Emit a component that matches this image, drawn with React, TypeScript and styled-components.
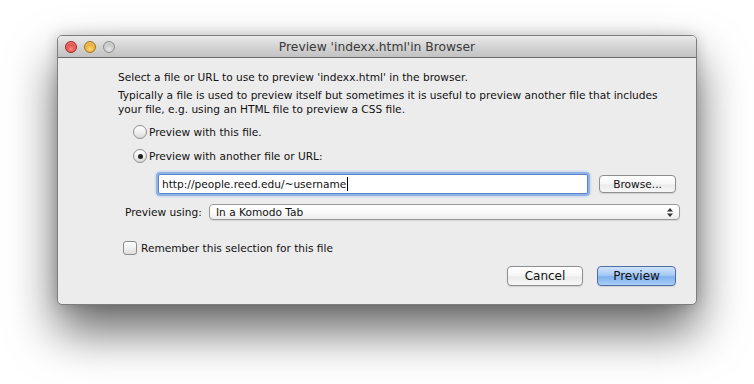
import React from 'react';
import styled, { createGlobalStyle } from 'styled-components';

const GlobalStyle = createGlobalStyle`
  html, body {
    margin: 0;
    padding: 0;
    background: #ffffff;
  }
  body {
    font-family: "DejaVu Sans", "Liberation Sans", sans-serif;
  }
`;

const Page = styled.div`
  width: 754px;
  height: 384px;
  box-sizing: border-box;
  padding: 35px 57px 0 57px;
  overflow: hidden;
`;

const Window = styled.div`
  width: 640px;
  height: 270px;
  box-sizing: border-box;
  border-radius: 5px;
  border: 1px solid #7d7d7d;
  background: #ececec;
  box-shadow: 0 26px 48px rgba(0, 0, 0, 0.6), 0 0 14px rgba(0, 0, 0, 0.18);
  display: flex;
  flex-direction: column;
  overflow: hidden;
`;

const TitleBar = styled.div`
  height: 22px;
  flex-shrink: 0;
  box-sizing: border-box;
  display: flex;
  align-items: center;
  position: relative;
  padding-left: 7px;
  gap: 7px;
  background: linear-gradient(#eaeaea, #d4d4d4 50%, #c2c2c2);
  border-bottom: 1px solid #6b6b6b;
`;

const Light = styled.span<{ $c1: string; $c2: string; $edge: string }>`
  width: 12px;
  height: 12px;
  border-radius: 50%;
  box-sizing: border-box;
  border: 1px solid ${(p) => p.$edge};
  background: radial-gradient(circle at 50% 70%, ${(p) => p.$c1}, ${(p) => p.$c2} 75%);
  box-shadow: inset 0 1px 2px rgba(255, 255, 255, 0.6);
`;

const Title = styled.div`
  position: absolute;
  left: 0;
  right: 0;
  text-align: center;
  font-size: 12.3px;
  color: #3a3a3a;
  pointer-events: none;
`;

const Body = styled.div`
  flex: 1;
  display: flex;
  flex-direction: column;
  padding: 12px 20px 0 60px;
  font-size: 10.6px;
  color: #111;
`;

const Para = styled.div<{ $top?: number }>`
  line-height: 14px;
  margin-top: ${(p) => p.$top ?? 0}px;
  white-space: nowrap;
`;

const OptionRow = styled.label<{ $top: number; $indent?: number }>`
  display: flex;
  align-items: center;
  gap: 2px;
  height: 16px;
  margin-top: ${(p) => p.$top}px;
  margin-left: ${(p) => p.$indent ?? 0}px;
`;

const Radio = styled.span<{ $on?: boolean }>`
  width: 14px;
  height: 14px;
  border-radius: 50%;
  box-sizing: border-box;
  border: 1px solid #8c8c8c;
  background: linear-gradient(#ffffff, #f0f0f0 50%, #dadada);
  display: flex;
  align-items: center;
  justify-content: center;
  &::after {
    content: '';
    display: ${(p) => (p.$on ? 'block' : 'none')};
    width: 5px;
    height: 5px;
    border-radius: 50%;
    background: #222;
  }
`;

const Check = styled.span`
  width: 14px;
  height: 14px;
  border-radius: 3px;
  box-sizing: border-box;
  border: 1px solid #8c8c8c;
  background: linear-gradient(#ffffff, #f0f0f0 50%, #dcdcdc);
  margin-right: 2px;
`;

const FieldRow = styled.div`
  display: flex;
  align-items: center;
  margin-top: 10px;
  margin-left: 40px;
  gap: 11px;
`;

const TextField = styled.div`
  width: 431px;
  height: 20px;
  box-sizing: border-box;
  border: 1px solid #5b84c4;
  border-radius: 2px;
  box-shadow: 0 0 0 2px #8fb3e6, 0 0 3px 2px #a8c6ef;
  background: #fff;
  display: flex;
  align-items: center;
  padding-left: 3px;
  font-size: 10.6px;
`;

const Caret = styled.span`
  display: inline-block;
  width: 1px;
  height: 14px;
  background: #000;
  margin-left: 1px;
`;

const Button = styled.button<{ $w: number; $h: number; $primary?: boolean }>`
  width: ${(p) => p.$w}px;
  height: ${(p) => p.$h}px;
  box-sizing: border-box;
  border-radius: 4px;
  font-family: inherit;
  font-size: ${(p) => (p.$primary !== undefined ? 12 : 10.6)}px;
  color: #111;
  padding: 0;
  border: 1px solid ${(p) => (p.$primary ? '#4f6ea6' : '#8e8e8e')};
  background: ${(p) =>
    p.$primary
      ? 'linear-gradient(#cfe2fb, #a6c9f5 45%, #7fb1ee 55%, #a9cff7)'
      : 'linear-gradient(#ffffff, #f6f6f6 50%, #ebebeb 55%, #f7f7f7)'};
  box-shadow: 0 1px 1px rgba(0, 0, 0, 0.12);
`;

const SelectRow = styled.div`
  display: flex;
  align-items: center;
  margin-top: 10px;
  margin-left: 7px;
  margin-right: -4px;
`;

const SelectLabel = styled.span`
  width: 84px;
`;

const Select = styled.div`
  flex: 1;
  height: 16px;
  box-sizing: border-box;
  border: 1px solid #999;
  border-radius: 4px;
  background: linear-gradient(#ffffff, #fbfbfb 50%, #ededed);
  display: flex;
  align-items: center;
  justify-content: space-between;
  padding: 0 6px 0 6px;
  box-shadow: 0 1px 1px rgba(0, 0, 0, 0.1);
`;

const Arrows = styled.svg`
  width: 6px;
  height: 9px;
`;

const Footer = styled.div`
  display: flex;
  justify-content: flex-end;
  gap: 14px;
  margin-top: 10px;
`;

export default function App() {
  return (
    <>
      <GlobalStyle />
      <Page>
        <Window>
          <TitleBar>
            <Light $c1="#ff8a7f" $c2="#d5312a" $edge="#a3221d" />
            <Light $c1="#ffd878" $c2="#dd9a17" $edge="#a6720c" />
            <Light $c1="#e8e8e8" $c2="#b7b7b7" $edge="#8c8c8c" />
            <Title>Preview 'indexx.html'in Browser</Title>
          </TitleBar>
          <Body>
            <Para>Select a file or URL to use to preview 'indexx.html' in the browser.</Para>
            <Para $top={4}>
              Typically a file is used to preview itself but sometimes it is useful to preview another file that includes
              <br />
              your file, e.g. using an HTML file to preview a CSS file.
            </Para>
            <OptionRow $top={8} $indent={15}>
              <Radio />
              Preview with this file.
            </OptionRow>
            <OptionRow $top={8} $indent={15}>
              <Radio $on />
              Preview with another file or URL:
            </OptionRow>
            <FieldRow>
              <TextField>
                http://people.reed.edu/~username
                <Caret />
              </TextField>
              <Button $w={77} $h={18}>
                Browse...
              </Button>
            </FieldRow>
            <SelectRow>
              <SelectLabel>Preview using:</SelectLabel>
              <Select>
                In a Komodo Tab
                <Arrows viewBox="0 0 6 9">
                  <path d="M3 0 L6 3.5 H0 Z M3 9 L6 5.5 H0 Z" fill="#333" />
                </Arrows>
              </Select>
            </SelectRow>
            <OptionRow $top={20} $indent={5}>
              <Check />
              Remember this selection for this file
            </OptionRow>
            <Footer>
              <Button $w={76} $h={20} $primary={false}>
                Cancel
              </Button>
              <Button $w={79} $h={20} $primary>
                Preview
              </Button>
            </Footer>
          </Body>
        </Window>
      </Page>
    </>
  );
}
